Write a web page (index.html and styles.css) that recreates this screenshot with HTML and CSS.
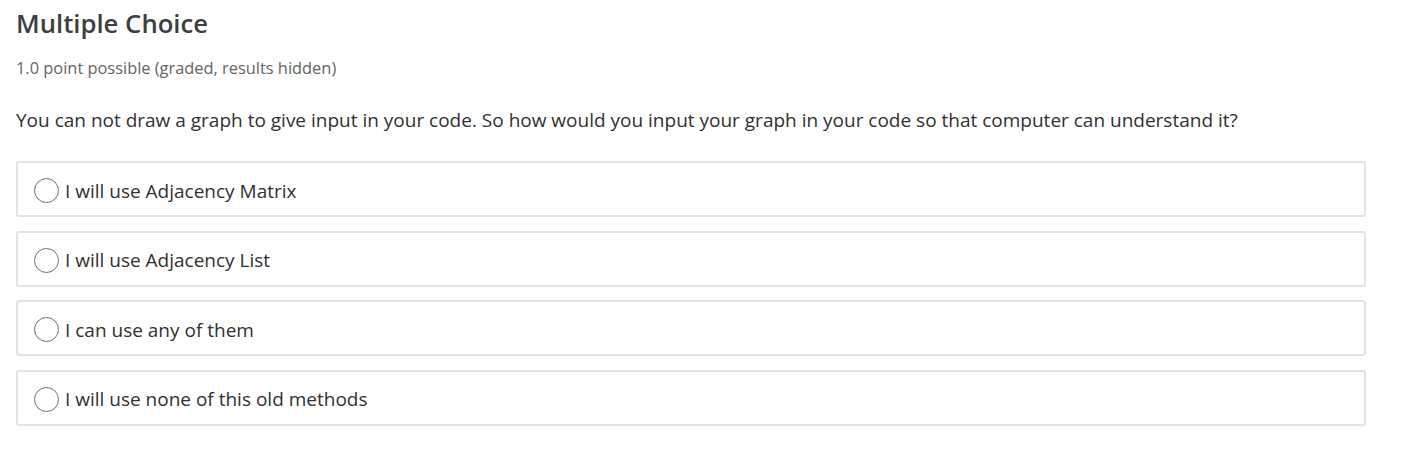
FILE: index.html
```html
<!DOCTYPE html>
<html>
<head>
<meta charset="utf-8">
<link rel="stylesheet" href="styles.css">
</head>
<body>
<div class="problem">
  <h2 class="title">Multiple Choice</h2>
  <div class="meta">1.0 point possible (graded, results hidden)</div>
  <p class="question">You can not draw a graph to give input in your code. So how would you input your graph in your code so that computer can understand it?</p>
  <div class="choices">
    <label class="choice"><span class="radio"></span><span class="label">I will use Adjacency Matrix</span></label>
    <label class="choice"><span class="radio"></span><span class="label">I will use Adjacency List</span></label>
    <label class="choice"><span class="radio"></span><span class="label">I can use any of them</span></label>
    <label class="choice"><span class="radio"></span><span class="label">I will use none of this old methods</span></label>
  </div>
</div>
</body>
</html>
```
FILE: styles.css
```css
html, body {
  margin: 0;
  padding: 0;
  background: #ffffff;
}
body {
  font-family: "Open Sans", "Noto Sans", sans-serif;
  color: #313131;
}
.problem {
  padding: 6px 54px 0 16px;
}
.title {
  margin: 0;
  font-size: 25.7px;
  font-weight: 600;
  line-height: 36px;
  color: #3d3e3f;
}
.meta {
  margin-top: 15px;
  font-size: 16.4px;
  line-height: 22px;
  color: #646464;
}
.question {
  margin: 28px 0 0 0;
  font-size: 19px;
  line-height: 26px;
  color: #313131;
}
.choices {
  margin-top: 28px;
  display: flex;
  flex-direction: column;
  gap: 13.5px;
}
.choice {
  display: flex;
  align-items: center;
  height: 56px;
  box-sizing: border-box;
  border: 2px solid #e3e3e3;
  border-radius: 3px;
  padding: 3px 0 0 16px;
}
.radio {
  width: 23px;
  height: 23px;
  border: 1.5px solid #707070;
  border-radius: 50%;
  flex: none;
  margin-right: 6px;
}
.label {
  font-size: 19px;
  color: #313131;
}
```
